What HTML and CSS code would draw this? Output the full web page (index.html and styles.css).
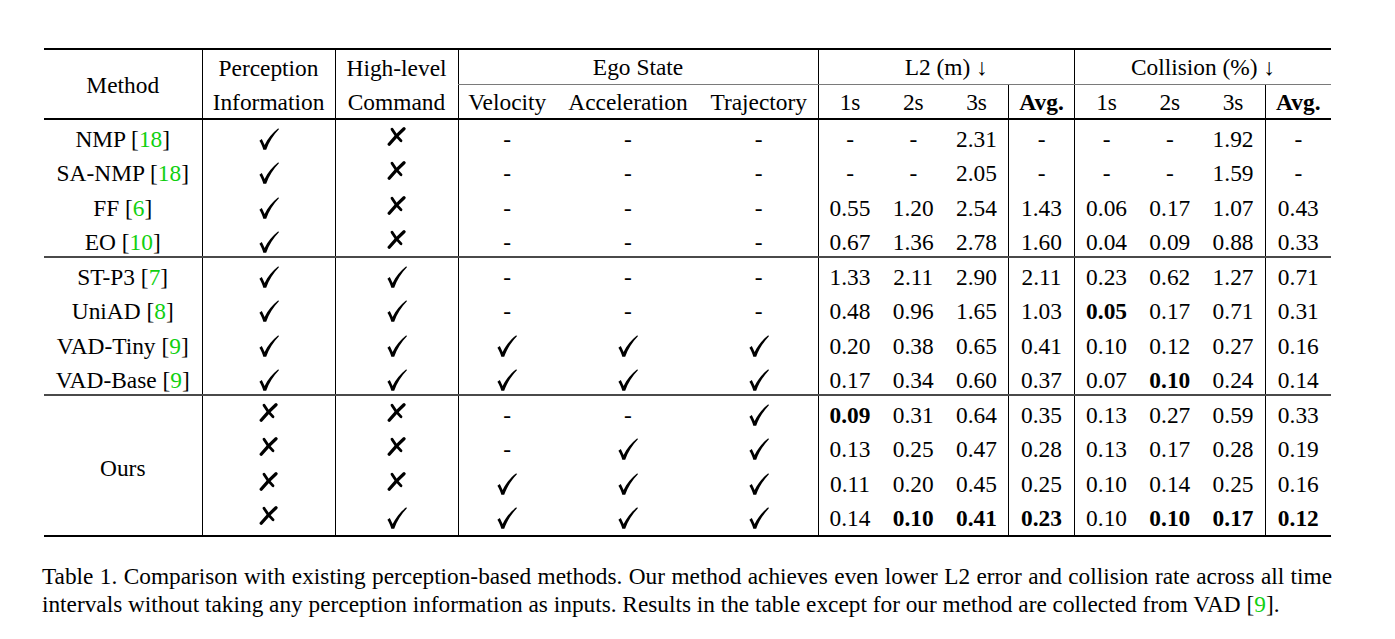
FILE: index.html
```html
<!DOCTYPE html>
<html lang="en">
<head>
<meta charset="utf-8">
<title>Table 1</title>
<link rel="stylesheet" href="styles.css">
</head>
<body>
<svg class="defs" width="0" height="0" aria-hidden="true">
  <defs>
    <symbol id="ck" viewBox="0 0 20 22">
      <path d="M0.4,12.8 L2.8,11.0 C3.8,13.0 4.7,15.0 5.6,17.0 C8.8,10.8 13.2,4.8 19.3,0.3 L19.9,1.3 C14.4,7.0 9.9,14.0 7.2,21.7 L4.3,21.7 C3.4,18.3 2.0,15.4 0.4,12.8 Z" fill="#000"/>
    </symbol>
    <symbol id="cx" viewBox="0 0 19 19">
      <path d="M17.0,1.8 Q10.0,8.0 2.2,17.2" fill="none" stroke="#000" stroke-width="3.3" stroke-linecap="round"/>
      <path d="M5.0,2.2 Q8.8,8.8 14.0,13.8" fill="none" stroke="#000" stroke-width="2.8" stroke-linecap="round"/>
    </symbol>
  </defs>
</svg>
<div class="page">
  <table class="results">
    <colgroup>
      <col class="w-method"><col class="w-perc"><col class="w-cmd">
      <col class="w-vel"><col class="w-acc"><col class="w-traj">
      <col class="w-n"><col class="w-n"><col class="w-n"><col class="w-avg">
      <col class="w-n"><col class="w-n"><col class="w-n"><col class="w-avg">
    </colgroup>
    <thead>
      <tr class="hrow">
        <th rowspan="2">Method</th>
        <th class="vl">Perception</th>
        <th class="vl">High-level</th>
        <th class="vl cmid" colspan="3">Ego State</th>
        <th class="vl cmid" colspan="4">L2 (m) ↓</th>
        <th class="vl cmid" colspan="4">Collision (%) ↓</th>
      </tr>
      <tr class="hrow">
        <th class="vl">Information</th>
        <th class="vl">Command</th>
        <th class="vl">Velocity</th>
        <th>Acceleration</th>
        <th>Trajectory</th>
        <th class="vl">1s</th><th>2s</th><th>3s</th><th class="vl b">Avg.</th>
        <th class="vl">1s</th><th>2s</th><th>3s</th><th class="vl b">Avg.</th>
      </tr>
    </thead>
    <tbody>
      <tr>
        <td>NMP [<span class="cite">18</span>]</td>
        <td class="vl"><svg class="ck"><use href="#ck"/></svg></td>
        <td class="vl"><svg class="cx"><use href="#cx"/></svg></td>
        <td class="vl">-</td><td>-</td><td>-</td>
        <td class="vl">-</td><td>-</td><td>2.31</td><td class="vl">-</td>
        <td class="vl">-</td><td>-</td><td>1.92</td><td class="vl">-</td>
      </tr>
      <tr>
        <td>SA-NMP [<span class="cite">18</span>]</td>
        <td class="vl"><svg class="ck"><use href="#ck"/></svg></td>
        <td class="vl"><svg class="cx"><use href="#cx"/></svg></td>
        <td class="vl">-</td><td>-</td><td>-</td>
        <td class="vl">-</td><td>-</td><td>2.05</td><td class="vl">-</td>
        <td class="vl">-</td><td>-</td><td>1.59</td><td class="vl">-</td>
      </tr>
      <tr>
        <td>FF [<span class="cite">6</span>]</td>
        <td class="vl"><svg class="ck"><use href="#ck"/></svg></td>
        <td class="vl"><svg class="cx"><use href="#cx"/></svg></td>
        <td class="vl">-</td><td>-</td><td>-</td>
        <td class="vl">0.55</td><td>1.20</td><td>2.54</td><td class="vl">1.43</td>
        <td class="vl">0.06</td><td>0.17</td><td>1.07</td><td class="vl">0.43</td>
      </tr>
      <tr>
        <td>EO [<span class="cite">10</span>]</td>
        <td class="vl"><svg class="ck"><use href="#ck"/></svg></td>
        <td class="vl"><svg class="cx"><use href="#cx"/></svg></td>
        <td class="vl">-</td><td>-</td><td>-</td>
        <td class="vl">0.67</td><td>1.36</td><td>2.78</td><td class="vl">1.60</td>
        <td class="vl">0.04</td><td>0.09</td><td>0.88</td><td class="vl">0.33</td>
      </tr>
    </tbody>
    <tbody class="group">
      <tr>
        <td>ST-P3 [<span class="cite">7</span>]</td>
        <td class="vl"><svg class="ck"><use href="#ck"/></svg></td>
        <td class="vl"><svg class="ck"><use href="#ck"/></svg></td>
        <td class="vl">-</td><td>-</td><td>-</td>
        <td class="vl">1.33</td><td>2.11</td><td>2.90</td><td class="vl">2.11</td>
        <td class="vl">0.23</td><td>0.62</td><td>1.27</td><td class="vl">0.71</td>
      </tr>
      <tr>
        <td>UniAD [<span class="cite">8</span>]</td>
        <td class="vl"><svg class="ck"><use href="#ck"/></svg></td>
        <td class="vl"><svg class="ck"><use href="#ck"/></svg></td>
        <td class="vl">-</td><td>-</td><td>-</td>
        <td class="vl">0.48</td><td>0.96</td><td>1.65</td><td class="vl">1.03</td>
        <td class="vl b">0.05</td><td>0.17</td><td>0.71</td><td class="vl">0.31</td>
      </tr>
      <tr>
        <td>VAD-Tiny [<span class="cite">9</span>]</td>
        <td class="vl"><svg class="ck"><use href="#ck"/></svg></td>
        <td class="vl"><svg class="ck"><use href="#ck"/></svg></td>
        <td class="vl"><svg class="ck"><use href="#ck"/></svg></td>
        <td><svg class="ck"><use href="#ck"/></svg></td>
        <td><svg class="ck"><use href="#ck"/></svg></td>
        <td class="vl">0.20</td><td>0.38</td><td>0.65</td><td class="vl">0.41</td>
        <td class="vl">0.10</td><td>0.12</td><td>0.27</td><td class="vl">0.16</td>
      </tr>
      <tr>
        <td>VAD-Base [<span class="cite">9</span>]</td>
        <td class="vl"><svg class="ck"><use href="#ck"/></svg></td>
        <td class="vl"><svg class="ck"><use href="#ck"/></svg></td>
        <td class="vl"><svg class="ck"><use href="#ck"/></svg></td>
        <td><svg class="ck"><use href="#ck"/></svg></td>
        <td><svg class="ck"><use href="#ck"/></svg></td>
        <td class="vl">0.17</td><td>0.34</td><td>0.60</td><td class="vl">0.37</td>
        <td class="vl">0.07</td><td class="b">0.10</td><td>0.24</td><td class="vl">0.14</td>
      </tr>
    </tbody>
    <tbody class="group">
      <tr>
        <td rowspan="4">Ours</td>
        <td class="vl"><svg class="cx"><use href="#cx"/></svg></td>
        <td class="vl"><svg class="cx"><use href="#cx"/></svg></td>
        <td class="vl">-</td><td>-</td>
        <td><svg class="ck"><use href="#ck"/></svg></td>
        <td class="vl b">0.09</td><td>0.31</td><td>0.64</td><td class="vl">0.35</td>
        <td class="vl">0.13</td><td>0.27</td><td>0.59</td><td class="vl">0.33</td>
      </tr>
      <tr>
        <td class="vl"><svg class="cx"><use href="#cx"/></svg></td>
        <td class="vl"><svg class="cx"><use href="#cx"/></svg></td>
        <td class="vl">-</td>
        <td><svg class="ck"><use href="#ck"/></svg></td>
        <td><svg class="ck"><use href="#ck"/></svg></td>
        <td class="vl">0.13</td><td>0.25</td><td>0.47</td><td class="vl">0.28</td>
        <td class="vl">0.13</td><td>0.17</td><td>0.28</td><td class="vl">0.19</td>
      </tr>
      <tr>
        <td class="vl"><svg class="cx"><use href="#cx"/></svg></td>
        <td class="vl"><svg class="cx"><use href="#cx"/></svg></td>
        <td class="vl"><svg class="ck"><use href="#ck"/></svg></td>
        <td><svg class="ck"><use href="#ck"/></svg></td>
        <td><svg class="ck"><use href="#ck"/></svg></td>
        <td class="vl">0.11</td><td>0.20</td><td>0.45</td><td class="vl">0.25</td>
        <td class="vl">0.10</td><td>0.14</td><td>0.25</td><td class="vl">0.16</td>
      </tr>
      <tr class="final">
        <td class="vl"><svg class="cx"><use href="#cx"/></svg></td>
        <td class="vl"><svg class="ck"><use href="#ck"/></svg></td>
        <td class="vl"><svg class="ck"><use href="#ck"/></svg></td>
        <td><svg class="ck"><use href="#ck"/></svg></td>
        <td><svg class="ck"><use href="#ck"/></svg></td>
        <td class="vl">0.14</td><td class="b">0.10</td><td class="b">0.41</td><td class="vl b">0.23</td>
        <td class="vl">0.10</td><td class="b">0.10</td><td class="b">0.17</td><td class="vl b">0.12</td>
      </tr>
    </tbody>
  </table>
  <p class="caption">Table 1. Comparison with existing perception-based methods. Our method achieves even lower L2 error and collision rate across all time intervals without taking any perception information as inputs. Results in the table except for our method are collected from VAD [<span class="cite">9</span>].</p>
</div>
</body>
</html>
```

FILE: styles.css
```css
html, body {
  margin: 0;
  background: #ffffff;
}

body {
  font-family: "Liberation Serif", "Times New Roman", serif;
  color: #000000;
}

.defs {
  position: absolute;
  width: 0;
  height: 0;
  overflow: hidden;
}

.page {
  padding: 48px 0 0 44px;
}

.results {
  border-collapse: collapse;
  table-layout: fixed;
  width: 1286px;
  font-size: 23.4px;
  border-top: 2px solid #000;
  border-bottom: 2px solid #000;
}

.w-method { width: 158px; }
.w-perc { width: 133px; }
.w-cmd { width: 123px; }
.w-vel { width: 98px; }
.w-acc { width: 144px; }
.w-traj { width: 118px; }
.w-n { width: 63.5px; }
.w-avg { width: 66px; }

.results th,
.results td {
  padding: 0;
  text-align: center;
  vertical-align: middle;
  font-weight: normal;
  white-space: nowrap;
  line-height: 26px;
}

.results td {
  padding-top: 5px;
}

.results thead th {
  padding-top: 1px;
}

.results thead {
  border-bottom: 2px solid #000;
}

.results .hrow {
  height: 35px;
}

.results tbody tr {
  height: 34px;
}

.results tbody tr:nth-child(even) {
  height: 35px;
}

.results tbody tr.final {
  height: 38px;
}

.results tbody tr.final td {
  padding-bottom: 3px;
}

.results tbody.group {
  border-top: 2px solid #4a4a4a;
}

.results .vl {
  border-left: 1px solid #000;
}

.results .cmid {
  border-bottom: 1px solid #7a7a7a;
}

.results .b {
  font-weight: bold;
}

.cite {
  color: #10d010;
}

.ck {
  display: inline-block;
  width: 20px;
  height: 22px;
  vertical-align: -3px;
}

.cx {
  display: inline-block;
  width: 19px;
  height: 19px;
  vertical-align: 1px;
}

.caption {
  width: 1290px;
  margin: 25px 0 0 -2px;
  font-size: 23.3px;
  line-height: 28px;
  text-align: justify;
}
```
